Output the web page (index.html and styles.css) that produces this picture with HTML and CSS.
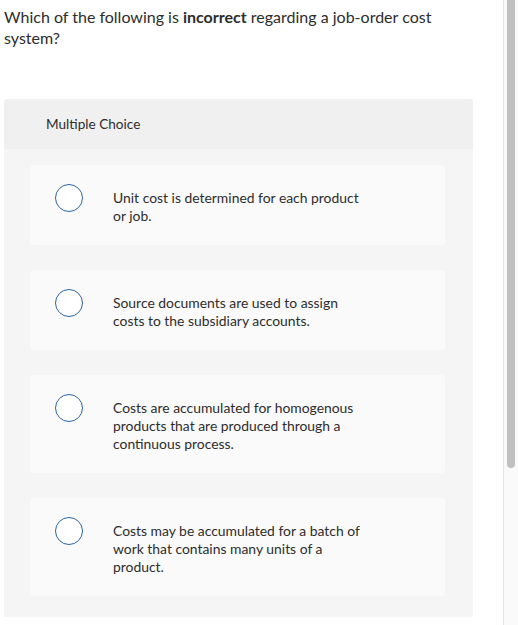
FILE: index.html
```html
<!DOCTYPE html>
<html>
<head>
<meta charset="utf-8">
<link rel="stylesheet" href="styles.css">
</head>
<body>
<div class="page">
  <main class="content">
    <p class="question">Which of the following is <strong>incorrect</strong> regarding a job-order cost system?</p>
    <section class="card">
      <header class="card-head">Multiple Choice</header>
      <div class="card-body">
        <div class="option"><span class="radio"></span><span class="label">Unit cost is determined for each product or job.</span></div>
        <div class="option"><span class="radio"></span><span class="label">Source documents are used to assign costs to the subsidiary accounts.</span></div>
        <div class="option"><span class="radio"></span><span class="label">Costs are accumulated for homogenous products that are produced through a continuous process.</span></div>
        <div class="option"><span class="radio"></span><span class="label">Costs may be accumulated for a batch of work that contains many units of a product.</span></div>
      </div>
    </section>
  </main>
  <div class="scrollbar"><div class="thumb"></div></div>
</div>
</body>
</html>
```
FILE: styles.css
```css
html, body {
  margin: 0;
  padding: 0;
  background: #fff;
}
body {
  font-family: Lato, "Liberation Sans", sans-serif;
  color: #2d2d2d;
}
.page {
  display: flex;
  width: 518px;
  height: 625px;
  overflow: hidden;
}
.content {
  width: 503px;
  padding: 0 0 0 4px;
  box-sizing: border-box;
}
.question {
  margin: 6px 0 0 0;
  font-size: 16px;
  line-height: 21px;
  width: 445px;
}
.question strong {
  font-weight: 700;
}
.card {
  margin-top: 51px;
  width: 469px;
  background: #f5f5f5;
  border-radius: 3px 3px 0 0;
}
.card-head {
  height: 50px;
  background: #f0f0f0;
  border-radius: 3px 3px 0 0;
  padding-left: 42px;
  font-size: 13.6px;
  line-height: 50px;
  box-sizing: border-box;
}
.card-body {
  padding: 16px 28px 21px 26px;
  display: flex;
  flex-direction: column;
  gap: 25px;
}
.option {
  display: flex;
  align-items: flex-start;
  background: #fafafa;
  border-radius: 4px;
  padding: 19px 20px 20px 25px;
}
.radio {
  flex: none;
  width: 28px;
  height: 28px;
  border: 1.5px solid #2a65a3;
  border-radius: 50%;
  box-sizing: border-box;
  background: #fff;
}
.label {
  margin-left: 30px;
  padding-top: 5px;
  max-width: 254px;
  font-size: 13.9px;
  line-height: 18px;
}
.scrollbar {
  width: 15px;
  height: 625px;
  background: #fafafa;
  border-left: 1px solid #e4e4e4;
  box-sizing: border-box;
  padding-left: 3px;
}
.thumb {
  width: 8px;
  height: 468px;
  background: #c1c1c1;
  border-radius: 0 0 4px 4px;
}
```
